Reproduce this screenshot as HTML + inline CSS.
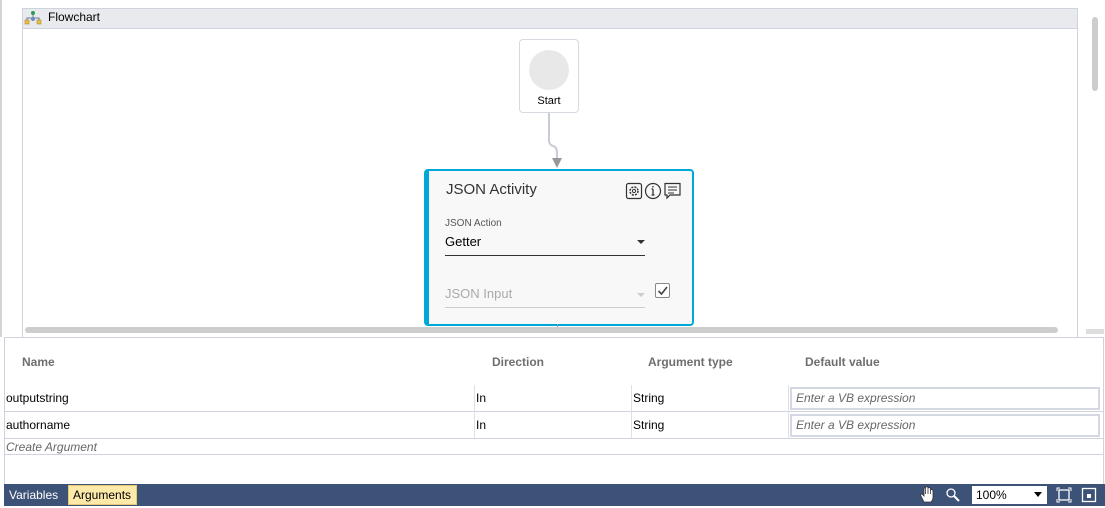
<!DOCTYPE html>
<html><head><style>
*{margin:0;padding:0;box-sizing:border-box}
body{width:1105px;height:508px;background:#fff;position:relative;overflow:hidden;font-family:"Liberation Sans",sans-serif;font-size:12px;color:#000}
.a{position:absolute}
</style></head><body>
<div class="a" style="left:0;top:0;width:2px;height:337px;background:#d4d4d4"></div>
<div class="a" style="left:22px;top:8px;width:1056px;height:330px;border:1px solid #cfd3de;border-bottom:none"></div>
<div class="a" style="left:23px;top:9px;width:1054px;height:20px;background:#e8eaee;border-bottom:1px solid #cfd3de"></div>
<svg class="a" style="left:24px;top:10px" width="18" height="18" viewBox="0 0 18 18">
<path d="M9 3V9M3 10V8H15V10" stroke="#6b7a99" fill="none" stroke-width="1"/>
<circle cx="9" cy="3" r="2" fill="#2e9a4e"/><circle cx="9" cy="9" r="2" fill="#6b8cc8"/>
<rect x="1" y="10" width="4" height="4" fill="#e8c048" stroke="#b08a20" stroke-width=".6"/>
<rect x="13" y="10" width="4" height="4" fill="#e8c048" stroke="#b08a20" stroke-width=".6"/>
</svg>
<div class="a" style="left:48px;top:10px;font-size:12px">Flowchart</div>
<div class="a" style="left:1092px;top:17px;width:6px;height:74px;background:#cdcdcd;border-radius:3px"></div>
<div class="a" style="left:519px;top:39px;width:60px;height:74px;border:1px solid #d6d9e0;border-radius:4px;background:#fff"></div>
<div class="a" style="left:529px;top:50px;width:40px;height:40px;border-radius:50%;background:#e8e8e8"></div>
<div class="a" style="left:519px;top:95px;width:60px;text-align:center;font-size:11px">Start</div>
<svg class="a" style="left:540px;top:113px" width="30" height="58"><path d="M9 0V27Q9 32 13 33Q17 34 17 40V46" stroke="#c8ccd6" stroke-width="2" fill="none"/><path d="M12 45H22L17 55Z" fill="#999"/></svg>
<div class="a" style="left:424px;top:169px;width:270px;height:157px;border:2px solid #00a8d8;border-left:5px solid #00a8d8;border-radius:4px;background:#f8f8f8"></div>
<div class="a" style="left:446px;top:181px;font-size:15px;color:#333">JSON Activity</div>
<svg class="a" style="left:625px;top:181px" width="58" height="20" viewBox="0 0 58 20">
<rect x="1.5" y="2.5" width="15" height="15" rx="2" fill="none" stroke="#333" stroke-width="1.2"/><circle cx="9" cy="10" r="4" fill="none" stroke="#333" stroke-width="1.5" stroke-dasharray="2 1.2"/><circle cx="9" cy="10" r="1.6" fill="none" stroke="#333"/>
<circle cx="28" cy="10" r="7.5" fill="none" stroke="#333" stroke-width="1.2"/><path d="M28 8V14M28 5V6.5M26.5 14H29.5M26.5 8H28" stroke="#333" stroke-width="1.3"/>
<path d="M40 2.5H55V14H45L42 17V14H40Z" fill="none" stroke="#333" stroke-width="1.2"/><path d="M43 6H52M43 9H52M43 12H49" stroke="#333"/>
</svg>
<div class="a" style="left:445px;top:218px;font-size:10px;color:#555">JSON Action</div>
<div class="a" style="left:445px;top:234px;font-size:13px">Getter</div>
<div class="a" style="left:637px;top:240px;border:4px solid transparent;border-top:4px solid #333"></div>
<div class="a" style="left:445px;top:255px;width:200px;height:1px;background:#333"></div>
<div class="a" style="left:445px;top:286px;font-size:13px;color:#aaa">JSON Input</div>
<div class="a" style="left:637px;top:293px;border:4px solid transparent;border-top:4px solid #ccc"></div>
<div class="a" style="left:445px;top:307px;width:200px;height:1px;background:#ccc"></div>
<div class="a" style="left:655px;top:283px;width:15px;height:15px;border:1.5px solid #888;border-radius:2px;background:#fff"></div>
<svg class="a" style="left:657px;top:285px" width="11" height="11"><path d="M1.5 6L4.5 9L10 2" stroke="#444" stroke-width="1.6" fill="none"/></svg>
<div class="a" style="left:557px;top:324px;width:1px;height:6px;background:#999"></div>
<div class="a" style="left:25px;top:327px;width:1033px;height:6px;background:#cdcdcd;border-radius:3px"></div>
<div class="a" style="left:1086px;top:329px;width:18px;height:5px;background:#ddd"></div>
<div class="a" style="left:4px;top:337px;width:1100px;height:148px;border:1px solid #cfd3de"></div>
<div class="a" style="left:22px;top:355px;font-size:12px;color:#555;font-weight:bold;opacity:.85">Name</div>
<div class="a" style="left:492px;top:355px;font-size:12px;color:#555;font-weight:bold;opacity:.85">Direction</div>
<div class="a" style="left:648px;top:355px;font-size:12px;color:#555;font-weight:bold;opacity:.85">Argument type</div>
<div class="a" style="left:805px;top:355px;font-size:12px;color:#555;font-weight:bold;opacity:.85">Default value</div>
<div class="a" style="left:5px;top:411px;width:1098px;height:1px;background:#cfd3de"></div>
<div class="a" style="left:5px;top:438px;width:1098px;height:1px;background:#cfd3de"></div>
<div class="a" style="left:5px;top:454px;width:1098px;height:1px;background:#cfd3de"></div>
<div class="a" style="left:474px;top:385px;width:1px;height:53px;background:#dde0e8"></div>
<div class="a" style="left:631px;top:385px;width:1px;height:53px;background:#dde0e8"></div>
<div class="a" style="left:788px;top:385px;width:1px;height:53px;background:#dde0e8"></div>
<div class="a" style="left:6px;top:391px">outputstring</div>
<div class="a" style="left:6px;top:418px">authorname</div>
<div class="a" style="left:476px;top:391px">In</div>
<div class="a" style="left:476px;top:418px">In</div>
<div class="a" style="left:633px;top:391px">String</div>
<div class="a" style="left:633px;top:418px">String</div>
<div class="a" style="left:790px;top:387px;width:310px;height:23px;border:2px solid #d4d8e2;background:#fff"></div>
<div class="a" style="left:790px;top:414px;width:310px;height:23px;border:2px solid #d4d8e2;background:#fff"></div>
<div class="a" style="left:796px;top:391px;font-style:italic;color:#666">Enter a VB expression</div>
<div class="a" style="left:796px;top:418px;font-style:italic;color:#666">Enter a VB expression</div>
<div class="a" style="left:6px;top:440px;font-style:italic;color:#666">Create Argument</div>
<div class="a" style="left:4px;top:484px;width:1101px;height:22px;background:#3d5277"></div>
<div class="a" style="left:9px;top:488px;color:#fff">Variables</div>
<div class="a" style="left:68px;top:485px;width:69px;height:20px;background:#fde9a8;border:1px solid #e6c870"></div>
<div class="a" style="left:73px;top:488px;color:#000">Arguments</div>
<svg class="a" style="left:920px;top:486px" width="16" height="17" viewBox="0 0 16 17"><path d="M4 16L1 10Q0 8 2 8L4 10V3Q4 1.5 5.5 2V8V1.5Q7 0 8 1.5V8V2Q9.5 1 10.5 2.5V8V4Q12 3 13 4.5V11Q13 14 11 16Z" fill="#fff" stroke="#333" stroke-width=".8"/></svg>
<svg class="a" style="left:945px;top:487px" width="16" height="16"><circle cx="6" cy="6" r="4" fill="none" stroke="#fff" stroke-width="1.3"/><path d="M9 9L14 14" stroke="#fff" stroke-width="2"/></svg>
<div class="a" style="left:972px;top:486px;width:75px;height:18px;background:#fff"></div>
<div class="a" style="left:976px;top:488px;font-size:12px">100%</div>
<div class="a" style="left:1034px;top:492px;border:4px solid transparent;border-top:5px solid #000"></div>
<svg class="a" style="left:1056px;top:487px" width="16" height="16"><rect x="3" y="3" width="10" height="10" fill="none" stroke="#fff" stroke-width="1.3"/><path d="M1 4V1H4M12 1H15V4M15 12V15H12M4 15H1V12" stroke="#fff" fill="none"/></svg>
<svg class="a" style="left:1081px;top:487px" width="16" height="16"><rect x="1.5" y="1.5" width="13" height="13" fill="none" stroke="#fff" stroke-width="1.3"/><rect x="6" y="7" width="4" height="4" fill="#fff"/></svg>
</body></html>
